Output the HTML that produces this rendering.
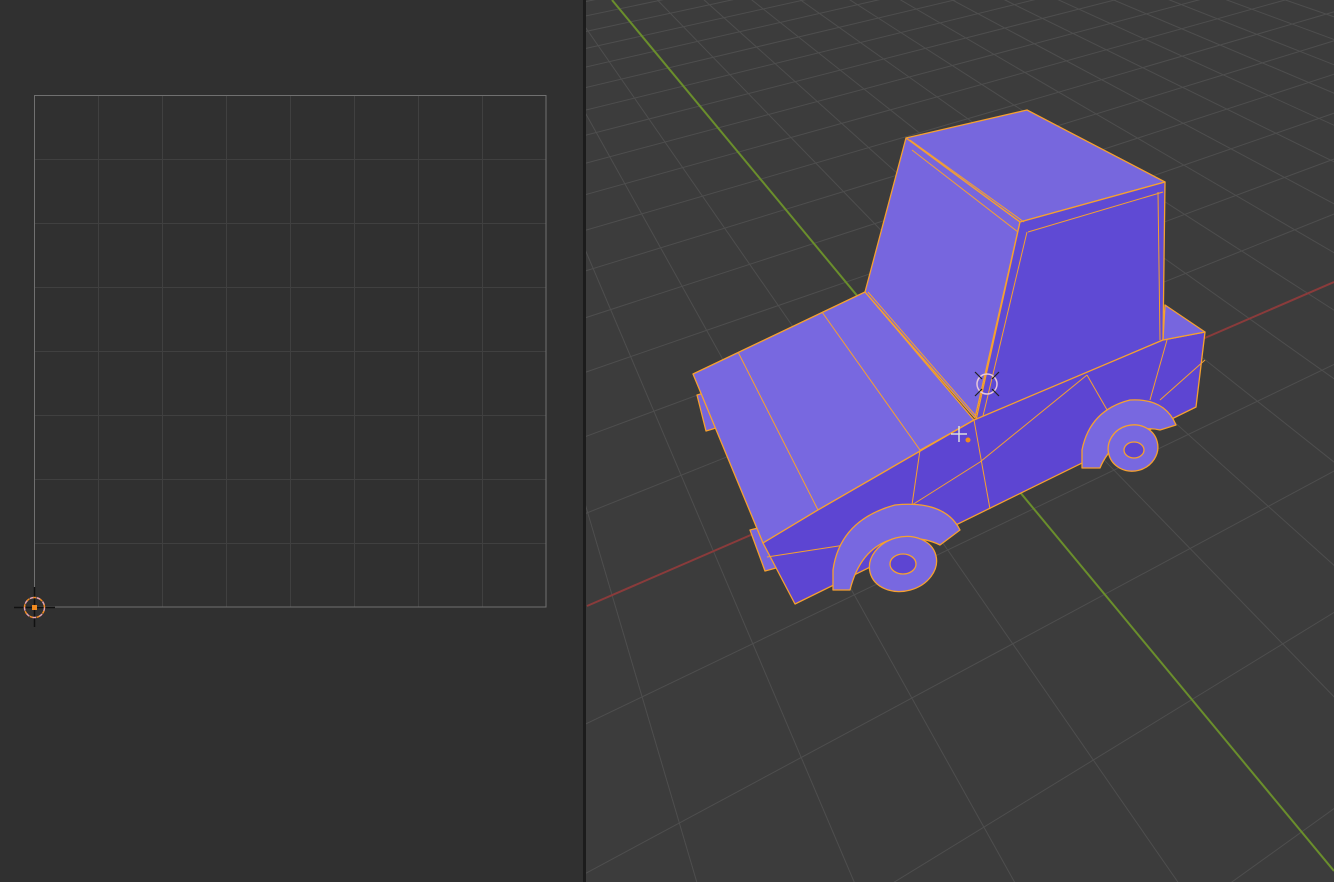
<!DOCTYPE html>
<html><head><style>
html,body{margin:0;padding:0;width:1334px;height:882px;overflow:hidden;background:#303030}
svg{display:block;overflow:hidden}
</style></head><body>
<svg id="s" width="1334" height="882" viewBox="0 0 1334 882" xmlns="http://www.w3.org/2000/svg">
<defs><clipPath id="rc"><rect x="586" y="0" width="748" height="882"/></clipPath></defs>
<rect x="0" y="0" width="584" height="882" fill="#303030"/>
<g stroke="#404040" stroke-width="1">
<line x1="98.5" y1="95" x2="98.5" y2="607"/><line x1="162.5" y1="95" x2="162.5" y2="607"/><line x1="226.5" y1="95" x2="226.5" y2="607"/><line x1="290.5" y1="95" x2="290.5" y2="607"/><line x1="354.5" y1="95" x2="354.5" y2="607"/><line x1="418.5" y1="95" x2="418.5" y2="607"/><line x1="482.5" y1="95" x2="482.5" y2="607"/>
<line x1="35" y1="159.5" x2="546" y2="159.5"/><line x1="35" y1="223.5" x2="546" y2="223.5"/><line x1="35" y1="287.5" x2="546" y2="287.5"/><line x1="35" y1="351.5" x2="546" y2="351.5"/><line x1="35" y1="415.5" x2="546" y2="415.5"/><line x1="35" y1="479.5" x2="546" y2="479.5"/><line x1="35" y1="543.5" x2="546" y2="543.5"/>
</g>
<rect x="34.5" y="95.5" width="511.5" height="511.5" fill="none" stroke="#707070" stroke-width="1"/>
<g>
<line x1="34.5" y1="587" x2="34.5" y2="627" stroke="#111" stroke-width="1.5"/>
<line x1="14" y1="607.5" x2="55" y2="607.5" stroke="#111" stroke-width="1.5"/>
<circle cx="34.5" cy="607.5" r="10" fill="none" stroke="#e0a0b0" stroke-width="1.5" stroke-dasharray="4 3"/>
<circle cx="34.5" cy="607.5" r="10" fill="none" stroke="#f08a20" stroke-width="1.5" stroke-dasharray="3 4" stroke-dashoffset="3.5"/>
<rect x="32" y="605" width="5" height="5" fill="#f08a20"/>
</g>
<g clip-path="url(#rc)">
<rect x="586" y="0" width="748" height="882" fill="#3c3c3c"/>
<g id="grid" stroke="#4e4e4e" stroke-width="1"></g>
<line x1="612" y1="0" x2="1334" y2="871" stroke="#6a8e2c" stroke-width="2"/>
<line x1="587" y1="606" x2="1334" y2="282" stroke="#8a3b3b" stroke-width="2"/>
</g>
<g stroke="#f5a030" stroke-width="1.3" stroke-linejoin="round">
<polygon points="697,395 708,392 716,428 706,431" fill="#7766de"/>
<polygon points="750,530 762,527 776,568 765,571" fill="#7766de"/>
<polygon points="906,138 1027,110 1165,182 1020,222" fill="#7767dd"/>
<polygon points="906,138 1020,222 975,418 865,292" fill="#7766de"/>
<polygon points="1020,222 1165,182 1163,340 976,420" fill="#5f4ad4"/>
<polygon points="693,374 865,292 974,420 818,510 763,543" fill="#7868e0"/>
<polygon points="763,543 818,510 974,420 1163,340 1205,332 1196,407 795,604" fill="#5d45d2"/>
<polygon points="1163,340 1165,305 1205,332" fill="#7766de"/>
<g fill="none" stroke-width="1">
<line x1="910" y1="140" x2="1024" y2="222"/><line x1="912" y1="150" x2="1018" y2="232"/>
<line x1="1028" y1="232" x2="1163" y2="192"/><line x1="1027" y1="232" x2="983" y2="416"/>
<line x1="1158" y1="192" x2="1160" y2="340"/>
<line x1="738" y1="352" x2="818" y2="510"/><line x1="822" y1="312" x2="920" y2="450"/>
<line x1="912" y1="505" x2="920" y2="450"/><line x1="920" y1="450" x2="974" y2="420"/>
<line x1="974" y1="420" x2="990" y2="509"/><line x1="980" y1="462" x2="1087" y2="375"/>
<line x1="980" y1="462" x2="912" y2="505"/><line x1="1087" y1="375" x2="1110" y2="415"/>
<line x1="1167" y1="340" x2="1150" y2="400"/><line x1="1205" y1="360" x2="1160" y2="400"/>
<line x1="767" y1="557" x2="845" y2="545"/>
<line x1="868" y1="292" x2="975" y2="415"/>
</g>
<path d="M833,590 L833,570 Q840,520 895,505 Q945,500 960,530 L940,545 Q920,535 890,540 Q860,550 850,590 Z" fill="#7868e0"/>
<ellipse cx="903" cy="564" rx="34" ry="27" fill="#7868e0" transform="rotate(-15 903 564)"/>
<ellipse cx="903" cy="564" rx="13" ry="10" fill="#5d45d2"/>
<path d="M1082,468 L1082,450 Q1090,410 1130,400 Q1165,398 1176,425 L1160,430 Q1140,425 1120,440 Q1105,455 1100,468 Z" fill="#7868e0"/>
<ellipse cx="1133" cy="448" rx="25" ry="23" fill="#7868e0" transform="rotate(-15 1133 448)"/>
<ellipse cx="1134" cy="450" rx="10" ry="8" fill="#5d45d2"/>
</g>
<circle cx="987" cy="384" r="10" fill="none" stroke="#e8c8d8" stroke-width="1.5"/>
<g stroke="#222" stroke-width="1.2"><line x1="975" y1="372" x2="982" y2="379"/><line x1="999" y1="372" x2="992" y2="379"/><line x1="975" y1="396" x2="982" y2="389"/><line x1="999" y1="396" x2="992" y2="389"/></g>
<g stroke="#ddd" stroke-width="1.5"><line x1="959" y1="426" x2="959" y2="442"/><line x1="951" y1="434" x2="967" y2="434"/></g>
<circle cx="968" cy="440" r="2.5" fill="#f08a20"/>
<rect x="583" y="0" width="3" height="882" fill="#1c1c1c"/>
</svg>
<script>
(function(){
var g=document.getElementById('grid');
var O=[975,437.5],A=[78,-34],B=[-54,-65],p=0.035,q=0.085;
function P(u,v){var d=1+u*p+v*q;return d>0.06?[O[0]+(u*A[0]+v*B[0])/d,O[1]+(u*A[1]+v*B[1])/d]:null;}
function seg(a,b){if(!a||!b)return;var l=document.createElementNS('http://www.w3.org/2000/svg','line');l.setAttribute('x1',a[0]);l.setAttribute('y1',a[1]);l.setAttribute('x2',b[0]);l.setAttribute('y2',b[1]);g.appendChild(l);}
function lo(k,s){for(var t=-40;t<200;t++){var d=1+t*k+s;if(d>0.06)return t;}return 0;}
for(var i=-40;i<=60;i++){
 if(i==0)continue;
 var a=lo(p,i*q),b=lo(q,i*p);
 seg(P(i,b),P(i,300));
 seg(P(a,i),P(300,i));
}
})();
</script>
</body></html>
